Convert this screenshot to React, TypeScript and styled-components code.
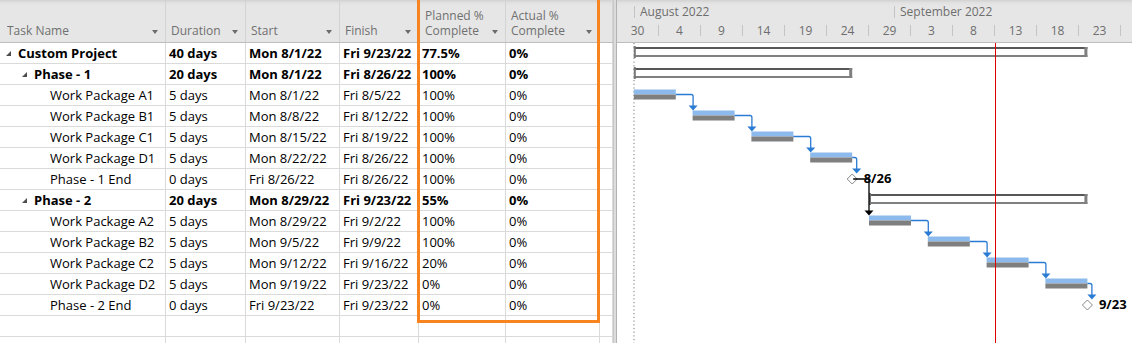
import React from 'react';
import styled, { createGlobalStyle } from 'styled-components';

const COLUMNS = '166px 80px 94px 79px 87px 94px 13px';
const ROW_H = 21;
const DAY_W = 8.4;
const ORIGIN = 16.8; // Aug 1 inside the chart area

type Row = {
  name: string;
  level: number;
  bold?: boolean;
  toggle?: boolean;
  duration: string;
  start: string;
  finish: string;
  planned: string;
  actual: string;
};

const rows: Row[] = [
  { name: 'Custom Project', level: 0, bold: true, toggle: true, duration: '40 days', start: 'Mon 8/1/22', finish: 'Fri 9/23/22', planned: '77.5%', actual: '0%' },
  { name: 'Phase - 1', level: 1, bold: true, toggle: true, duration: '20 days', start: 'Mon 8/1/22', finish: 'Fri 8/26/22', planned: '100%', actual: '0%' },
  { name: 'Work Package A1', level: 2, duration: '5 days', start: 'Mon 8/1/22', finish: 'Fri 8/5/22', planned: '100%', actual: '0%' },
  { name: 'Work Package B1', level: 2, duration: '5 days', start: 'Mon 8/8/22', finish: 'Fri 8/12/22', planned: '100%', actual: '0%' },
  { name: 'Work Package C1', level: 2, duration: '5 days', start: 'Mon 8/15/22', finish: 'Fri 8/19/22', planned: '100%', actual: '0%' },
  { name: 'Work Package D1', level: 2, duration: '5 days', start: 'Mon 8/22/22', finish: 'Fri 8/26/22', planned: '100%', actual: '0%' },
  { name: 'Phase - 1 End', level: 2, duration: '0 days', start: 'Fri 8/26/22', finish: 'Fri 8/26/22', planned: '100%', actual: '0%' },
  { name: 'Phase - 2', level: 1, bold: true, toggle: true, duration: '20 days', start: 'Mon 8/29/22', finish: 'Fri 9/23/22', planned: '55%', actual: '0%' },
  { name: 'Work Package A2', level: 2, duration: '5 days', start: 'Mon 8/29/22', finish: 'Fri 9/2/22', planned: '100%', actual: '0%' },
  { name: 'Work Package B2', level: 2, duration: '5 days', start: 'Mon 9/5/22', finish: 'Fri 9/9/22', planned: '100%', actual: '0%' },
  { name: 'Work Package C2', level: 2, duration: '5 days', start: 'Mon 9/12/22', finish: 'Fri 9/16/22', planned: '20%', actual: '0%' },
  { name: 'Work Package D2', level: 2, duration: '5 days', start: 'Mon 9/19/22', finish: 'Fri 9/23/22', planned: '0%', actual: '0%' },
  { name: 'Phase - 2 End', level: 2, duration: '0 days', start: 'Fri 9/23/22', finish: 'Fri 9/23/22', planned: '0%', actual: '0%' },
];

type Bar = { kind: 'summary' | 'task' | 'milestone'; from: number; to: number; label?: string };

// days counted from Mon Aug 1
const bars: Bar[] = [
  { kind: 'summary', from: 0, to: 54 },
  { kind: 'summary', from: 0, to: 26 },
  { kind: 'task', from: 0, to: 5 },
  { kind: 'task', from: 7, to: 12 },
  { kind: 'task', from: 14, to: 19 },
  { kind: 'task', from: 21, to: 26 },
  { kind: 'milestone', from: 26, to: 26, label: '8/26' },
  { kind: 'summary', from: 28, to: 54 },
  { kind: 'task', from: 28, to: 33 },
  { kind: 'task', from: 35, to: 40 },
  { kind: 'task', from: 42, to: 47 },
  { kind: 'task', from: 49, to: 54 },
  { kind: 'milestone', from: 54, to: 54, label: '9/23' },
];

const links: [number, number][] = [
  [2, 3], [3, 4], [4, 5], [5, 6],
  [8, 9], [9, 10], [10, 11], [11, 12],
];

// last cell runs past the right edge, so it stays unlabelled
const days = ['30', '4', '9', '14', '19', '24', '29', '3', '8', '13', '18', '23', ''];

const dx = (d: number) => ORIGIN + d * DAY_W;

const GlobalStyle = createGlobalStyle`
  body {
    margin: 0;
    background: #fff;
    font-family: "Open Sans", "Noto Sans", Arial, sans-serif;
  }
`;

const Screen = styled.div`
  width: 1132px;
  height: 343px;
  display: flex;
  overflow: hidden;
  background: #fff;
`;

const TablePane = styled.div`
  position: relative;
  width: 613px;
  flex-shrink: 0;
`;

const HeadRow = styled.div`
  display: grid;
  grid-template-columns: ${COLUMNS};
  height: 43px;
  box-sizing: border-box;
  border-bottom: 1px solid #bdbdbd;
  background: linear-gradient(#d2d2d2 0, #e2e2e2 3px, #e6e6e6 6px);
`;

const HeadCell = styled.div<{ $pad?: number }>`
  display: flex;
  align-items: flex-end;
  padding: 0 7px 4px ${p => p.$pad ?? 5}px;
  border-right: 1px solid #d3d3d3;
  min-width: 0;
  color: #707070;
  font-size: 12px;
  line-height: 15px;
`;

const HeadLabel = styled.div`
  flex: 1;
  white-space: nowrap;
  overflow: hidden;
`;

const SortCaret = styled.span`
  width: 0;
  height: 0;
  margin-bottom: 4px;
  border-left: 3.5px solid transparent;
  border-right: 3.5px solid transparent;
  border-top: 4px solid #6c6c6c;
`;

const BodyRow = styled.div`
  display: grid;
  grid-template-columns: ${COLUMNS};
  height: ${ROW_H}px;
  box-sizing: border-box;
  border-bottom: 1px solid #dadada;
`;

const Cell = styled.div<{ $bold?: boolean }>`
  padding-left: 3px;
  border-right: 1px solid #dadada;
  font-size: 13px;
  line-height: 20px;
  font-weight: ${p => (p.$bold ? 700 : 400)};
  color: #000;
  white-space: nowrap;
  overflow: hidden;
`;

const NameCell = styled(Cell)<{ $level: number }>`
  display: flex;
  align-items: center;
  padding-left: ${p => p.$level * 16 + 6}px;
`;

const ToggleSlot = styled.span`
  width: 12px;
  flex-shrink: 0;
  display: flex;
  align-items: center;
  padding-top: 1px;
`;

const Highlight = styled.div`
  position: absolute;
  left: 417px;
  top: -3px;
  width: 183px;
  height: 326px;
  box-sizing: border-box;
  border: 3px solid #f7841f;
  pointer-events: none;
`;

const Splitter = styled.div`
  width: 4px;
  flex-shrink: 0;
  box-sizing: border-box;
  background: #dcdcdc;
  border-left: 1px solid #c8c8c8;
  border-right: 1px solid #b2b2b2;
`;

const GanttPane = styled.div`
  flex: 1;
  display: flex;
  flex-direction: column;
  min-width: 0;
`;

const Timescale = styled.div`
  height: 43px;
  flex-shrink: 0;
  box-sizing: border-box;
  border-bottom: 1px solid #bdbdbd;
  background: linear-gradient(#d2d2d2 0, #e2e2e2 3px, #e6e6e6 6px);
  color: #6e6e6e;
  font-size: 12px;
  overflow: hidden;
`;

const TierRow = styled.div`
  display: flex;
  align-items: center;
  height: 21px;
  white-space: nowrap;
`;

const MonthCell = styled.div<{ $w?: number; $tick?: boolean }>`
  ${p => (p.$w ? `width: ${p.$w}px;` : 'flex: 1;')}
  flex-shrink: 0;
  box-sizing: border-box;
  height: 12px;
  margin-top: 3px;
  line-height: 12px;
  padding-left: 5px;
  border-left: 1px solid ${p => (p.$tick ? '#c4c4c4' : 'transparent')};
`;

const DayCell = styled.div`
  width: 42px;
  flex-shrink: 0;
  box-sizing: border-box;
  height: 11px;
  margin-bottom: 2px;
  line-height: 11px;
  text-align: center;
  border-right: 1px solid #c4c4c4;
`;

const Chart = styled.svg`
  display: block;
  flex: 1;
`;

function Toggle() {
  return (
    <svg width="5" height="5" viewBox="0 0 5 5">
      <polygon points="5,0 5,5 0,5" fill="#4d4d4d" />
    </svg>
  );
}

function GanttBar({ bar, index }: { bar: Bar; index: number }) {
  const top = index * ROW_H;
  const x1 = dx(bar.from);
  const x2 = dx(bar.to);
  const w = x2 - x1;

  if (bar.kind === 'summary') {
    return (
      <g>
        <rect x={x1} y={top + 4} width={w} height={10} fill="#fff" />
        <rect x={x1} y={top + 4} width={w} height={2} fill="#575757" />
        <rect x={x1} y={top + 12} width={w} height={2} fill="#808080" />
        <rect x={x1} y={top + 3} width={2} height={12} fill="#777" />
        <rect x={x2 - 3} y={top + 4} width={3} height={10} fill="#808080" />
      </g>
    );
  }

  if (bar.kind === 'task') {
    return (
      <g>
        <rect x={x1} y={top + 4.5} width={w} height={5} fill="#8dbaec" />
        <rect x={x1} y={top + 9.5} width={w} height={5} fill="#7f7f7f" />
      </g>
    );
  }

  const cy = top + 10;
  return (
    <g>
      <polygon
        points={`${x1},${cy - 5} ${x1 + 5},${cy} ${x1},${cy + 5} ${x1 - 5},${cy}`}
        fill="#fff"
        stroke="#8a8a8a"
        strokeWidth={1}
      />
    </g>
  );
}

function Link({ from, to, color }: { from: number; to: number; color: string }) {
  const x1 = dx(bars[from].to);
  const y = from * ROW_H + 9.5;
  const ax = Math.max(dx(bars[to].from) + 0.5, x1 + 4.5);
  const tip = to * ROW_H + 4.5;
  return (
    <g>
      <path
        d={`M${x1} ${y} H${ax - 2} Q${ax} ${y} ${ax} ${y + 2} V${tip - 4}`}
        fill="none"
        stroke={color}
        strokeWidth={1.3}
      />
      <polygon points={`${ax - 4.5},${tip - 5} ${ax + 4.5},${tip - 5} ${ax},${tip}`} fill={color} />
    </g>
  );
}

export default function App() {
  const blank = [0, 1];
  const phaseLinkY = 6 * ROW_H + 10;
  const phaseLinkX = dx(28);
  const phaseTip = 8 * ROW_H + 4.5;

  return (
    <>
      <GlobalStyle />
      <Screen>
        <TablePane>
          <HeadRow>
            <HeadCell $pad={7}>
              <HeadLabel>Task Name</HeadLabel>
              <SortCaret />
            </HeadCell>
            <HeadCell>
              <HeadLabel>Duration</HeadLabel>
              <SortCaret />
            </HeadCell>
            <HeadCell>
              <HeadLabel>Start</HeadLabel>
              <SortCaret />
            </HeadCell>
            <HeadCell>
              <HeadLabel>Finish</HeadLabel>
              <SortCaret />
            </HeadCell>
            <HeadCell $pad={6}>
              <HeadLabel>
                Planned %
                <br />
                Complete
              </HeadLabel>
              <SortCaret />
            </HeadCell>
            <HeadCell>
              <HeadLabel>
                Actual %
                <br />
                Complete
              </HeadLabel>
              <SortCaret />
            </HeadCell>
            <HeadCell />
          </HeadRow>

          {rows.map(row => (
            <BodyRow key={row.name}>
              <NameCell $level={row.level} $bold={row.bold}>
                <ToggleSlot>{row.toggle && <Toggle />}</ToggleSlot>
                {row.name}
              </NameCell>
              <Cell $bold={row.bold}>{row.duration}</Cell>
              <Cell $bold={row.bold}>{row.start}</Cell>
              <Cell $bold={row.bold}>{row.finish}</Cell>
              <Cell $bold={row.bold}>{row.planned}</Cell>
              <Cell $bold={row.bold}>{row.actual}</Cell>
              <Cell />
            </BodyRow>
          ))}
          {blank.map(i => (
            <BodyRow key={'blank' + i}>
              <Cell />
              <Cell />
              <Cell />
              <Cell />
              <Cell />
              <Cell />
              <Cell />
            </BodyRow>
          ))}

          {/* columns under review */}
          <Highlight />
        </TablePane>

        <Splitter />

        <GanttPane>
          <Timescale>
            <TierRow>
              <MonthCell $w={17} />
              <MonthCell $w={260} $tick>
                August 2022
              </MonthCell>
              <MonthCell $tick>September 2022</MonthCell>
            </TierRow>
            <TierRow>
              {days.map((d, i) => (
                <DayCell key={i}>{d}</DayCell>
              ))}
            </TierRow>
          </Timescale>

          <Chart width="515" height="300" viewBox="0 0 515 300">
            <line x1={17} y1={0} x2={17} y2={300} stroke="#777" strokeWidth={1} strokeDasharray="1.2 2.5" />

            {bars.map((bar, i) => (
              <GanttBar key={i} bar={bar} index={i} />
            ))}

            {links.map(([a, b]) => (
              <Link key={a} from={a} to={b} color="#2a7bd4" />
            ))}

            {/* milestone -> phase 2 */}
            <path
              d={`M${dx(26) + 1} ${phaseLinkY} H${phaseLinkX} V${phaseTip - 4}`}
              fill="none"
              stroke="#000"
              strokeWidth={1.3}
            />
            <polygon
              points={`${phaseLinkX - 4.5},${phaseTip - 5} ${phaseLinkX + 4.5},${phaseTip - 5} ${phaseLinkX},${phaseTip}`}
              fill="#000"
            />

            {bars.map((bar, i) =>
              bar.label ? (
                <text
                  key={'l' + i}
                  x={dx(bar.from) + 11.5}
                  y={i * ROW_H + 14}
                  fontFamily='"Open Sans", "Noto Sans", Arial, sans-serif'
                  fontSize={13}
                  fontWeight={700}
                  fill="#000"
                >
                  {bar.label}
                </text>
              ) : null
            )}

            {/* status date */}
            <line x1={378.5} y1={0} x2={378.5} y2={300} stroke="#e00000" strokeWidth={1} />
          </Chart>
        </GanttPane>
      </Screen>
    </>
  );
}
